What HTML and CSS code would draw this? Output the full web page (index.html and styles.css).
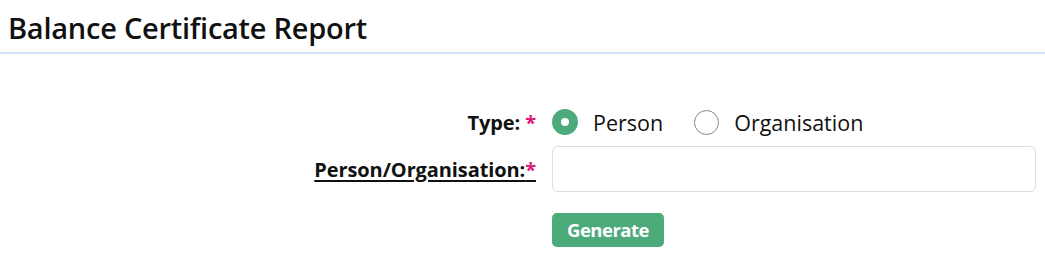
FILE: index.html
```html
<!DOCTYPE html>
<html lang="en">
<head>
    <meta charset="UTF-8">
    <title>Balance Certificate Report</title>
    <link rel="stylesheet" href="styles.css">
</head>
<body>
    <div class="page-header">
        <h1>Balance Certificate Report</h1>
    </div>
    <form class="report-form">
        <div class="form-row">
            <label class="form-label">Type: <span class="req">*</span></label>
            <div class="radios">
                <label class="radio"><span class="dot checked"></span>Person</label>
                <label class="radio"><span class="dot"></span>Organisation</label>
            </div>
        </div>
        <div class="form-row">
            <label class="form-label underline">Person/Organisation:<span class="req">*</span></label>
            <div class="field"><input type="text" class="text-input"></div>
        </div>
        <div class="form-row">
            <div></div>
            <div><button type="button" class="btn">Generate</button></div>
        </div>
    </form>
</body>
</html>
```

FILE: styles.css
```css
body {
    margin: 0;
    font-family: 'Open Sans', sans-serif;
    color: #111;
    background: white;
}
.page-header {
    padding: 8px 8px 0;
    border-bottom: 2px solid #d6e4f7;
    height: 44px;
}
h1 {
    margin: 0;
    font-size: 29px;
    font-weight: 600;
    letter-spacing: -0.25px;
    line-height: 40px;
}
.report-form {
    padding-top: 49px;
}
.form-row {
    display: grid;
    grid-template-columns: 536px 484px;
    column-gap: 16px;
    align-items: center;
    margin-bottom: 5px;
}
.form-label {
    text-align: right;
    font-weight: bold;
    font-size: 20px;
    letter-spacing: -0.1px;
}
.form-label.underline {
    text-decoration: underline;
    text-underline-offset: 3px;
}
.req {
    color: #e0157a;
}
.radios {
    display: flex;
    gap: 31px;
    height: 38px;
    align-items: center;
}
.radio {
    display: flex;
    align-items: center;
    gap: 15px;
    font-size: 21.5px;
}
.dot {
    width: 25px;
    height: 25px;
    border: 1px solid #888;
    border-radius: 50%;
    box-sizing: border-box;
    background: white;
}
.dot.checked {
    border: 9px solid #4caa7b;
    width: 26px;
    height: 26px;
}
.text-input {
    width: 100%;
    height: 46px;
    box-sizing: border-box;
    border: 1px solid #ddd;
    border-radius: 6px;
}
.btn {
    margin-top: 16px;
    background: #4caa7b;
    color: white;
    border: none;
    border-radius: 5px;
    font-family: 'Open Sans', sans-serif;
    font-weight: bold;
    font-size: 18.5px;
    line-height: 24px;
    letter-spacing: -0.5px;
    padding: 5px 15px;
}
```
